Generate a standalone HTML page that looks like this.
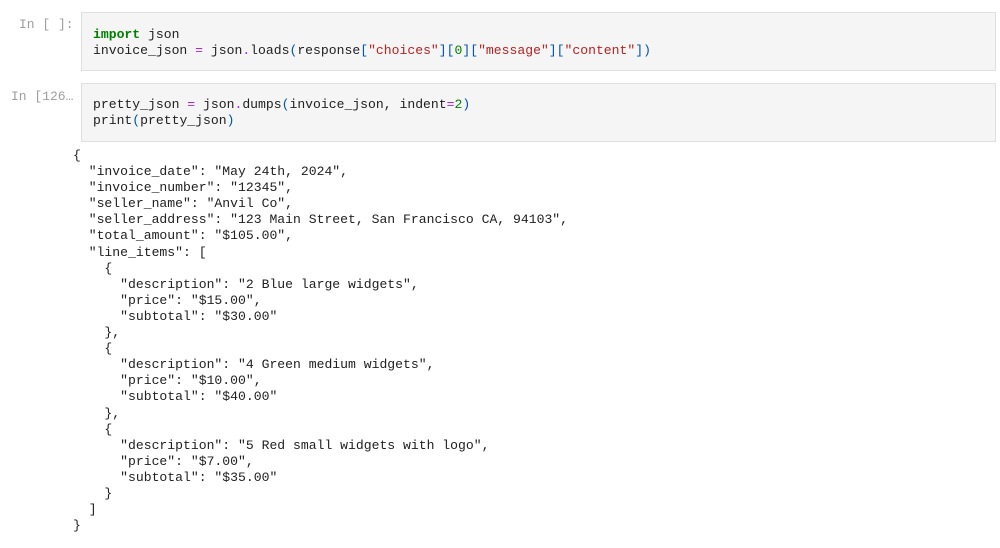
<!DOCTYPE html>
<html><head><style>
body{margin:0;background:#fff;width:1000px;height:548px;overflow:hidden;font-family:"Liberation Mono",monospace;font-size:13.1px;}
.box{position:absolute;left:81px;width:915px;background:#f5f5f5;border:1px solid #e0e0e0;box-sizing:border-box;}
pre{margin:0;font-family:"Liberation Mono",monospace;font-size:13.1px;line-height:16.1px;color:#212121;}
.p{position:absolute;color:#9e9e9e;font-family:"Liberation Mono",monospace;font-size:13px;}
.k{color:#008000;font-weight:bold}.s{color:#ba2121}.o{color:#aa22ff}.n{color:#008000}.b{color:#0055aa}
</style></head><body>
<div class="p" style="left:19px;top:17px">In [ ]:</div>
<div class="box" style="top:12px;height:59px"><pre style="position:absolute;left:11px;top:14px"><span class="k">import</span> json
invoice_json <span class="o">=</span> json<span class="o">.</span>loads<span class="b">(</span>response<span class="b">[</span><span class="s">"choices"</span><span class="b">][</span><span class="n">0</span><span class="b">][</span><span class="s">"message"</span><span class="b">][</span><span class="s">"content"</span><span class="b">])</span></pre></div>
<div class="p" style="left:11px;top:89px">In [126…</div>
<div class="box" style="top:83px;height:59px"><pre style="position:absolute;left:11px;top:13px">pretty_json <span class="o">=</span> json<span class="o">.</span>dumps<span class="b">(</span>invoice_json, indent<span class="o">=</span><span class="n">2</span><span class="b">)</span>
print<span class="b">(</span>pretty_json<span class="b">)</span></pre></div>
<pre style="position:absolute;left:73px;top:148px">{
  "invoice_date": "May 24th, 2024",
  "invoice_number": "12345",
  "seller_name": "Anvil Co",
  "seller_address": "123 Main Street, San Francisco CA, 94103",
  "total_amount": "$105.00",
  "line_items": [
    {
      "description": "2 Blue large widgets",
      "price": "$15.00",
      "subtotal": "$30.00"
    },
    {
      "description": "4 Green medium widgets",
      "price": "$10.00",
      "subtotal": "$40.00"
    },
    {
      "description": "5 Red small widgets with logo",
      "price": "$7.00",
      "subtotal": "$35.00"
    }
  ]
}</pre>
</body></html>
